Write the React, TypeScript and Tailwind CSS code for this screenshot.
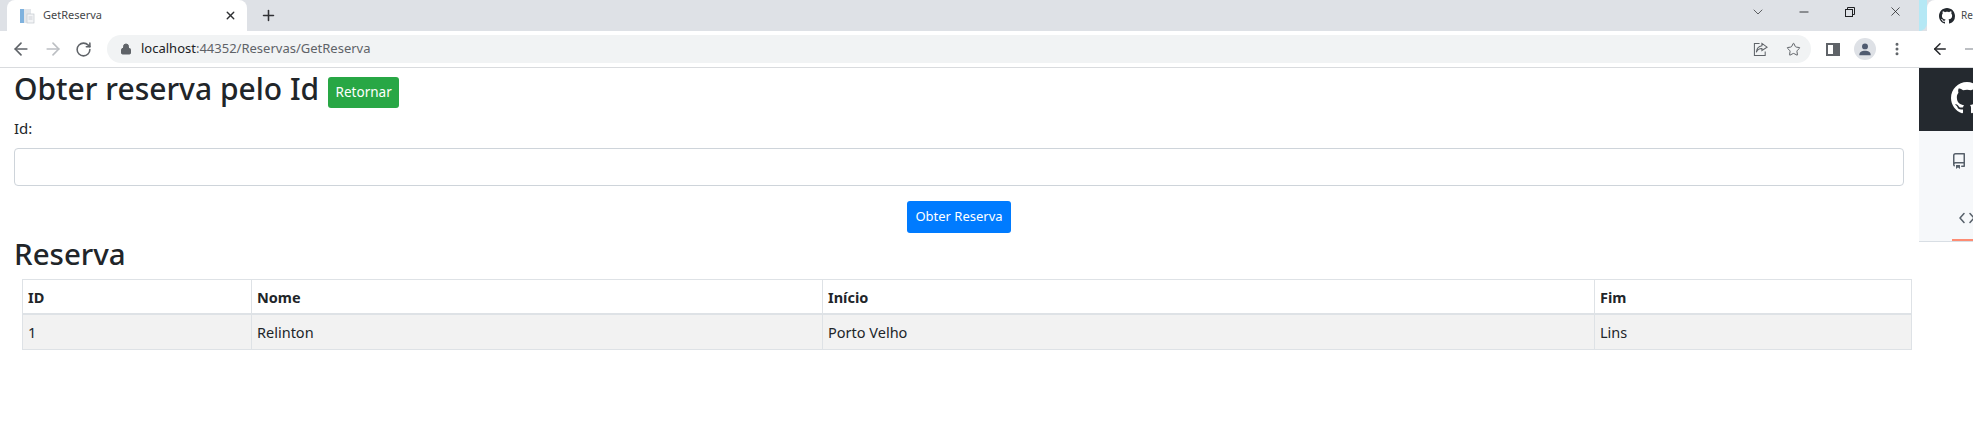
import React from "react";
import { ArrowLeft, ArrowRight, RotateCw, Lock, Plus, X, ChevronDown, Minus, Star, MoreVertical } from "lucide-react";

const font = "font-['Noto_Sans','Open_Sans',sans-serif]";

function GithubMark({ className }: { className?: string }) {
  return (
    <svg viewBox="0 0 16 16" className={className} fill="currentColor">
      <path d="M8 0C3.58 0 0 3.58 0 8c0 3.54 2.29 6.53 5.47 7.59.4.07.55-.17.55-.38 0-.19-.01-.82-.01-1.49-2.01.37-2.53-.49-2.69-.94-.09-.23-.48-.94-.82-1.13-.28-.15-.68-.52-.01-.53.63-.01 1.08.58 1.23.82.72 1.21 1.87.87 2.33.66.07-.52.28-.87.51-1.07-1.78-.2-3.64-.89-3.64-3.95 0-.87.31-1.59.82-2.15-.08-.2-.36-1.02.08-2.12 0 0 .67-.21 2.2.82.64-.18 1.32-.27 2-.27s1.36.09 2 .27c1.53-1.04 2.2-.82 2.2-.82.44 1.1.16 1.92.08 2.12.51.56.82 1.27.82 2.15 0 3.07-1.87 3.75-3.65 3.95.29.25.54.73.54 1.48 0 1.07-.01 1.93-.01 2.2 0 .21.15.46.55.38A8.01 8.01 0 0 0 16 8c0-4.42-3.58-8-8-8z" />
    </svg>
  );
}

function PageIcon() {
  return (
    <svg viewBox="0 0 16 16" className="w-4 h-4 shrink-0">
      <rect x="1" y="1" width="4" height="14" fill="#7fb2de" />
      <rect x="5" y="1" width="7" height="14" fill="#e3e6ea" />
      <rect x="8" y="6" width="7" height="9" fill="#f3f4f6" stroke="#c4c8cf" strokeWidth="0.7" />
      <path d="M9.5 9h4M9.5 11h4" stroke="#c4c8cf" strokeWidth="0.8" />
    </svg>
  );
}

function RestoreIcon() {
  return (
    <svg viewBox="0 0 10 10" className="w-[10px] h-[10px]" fill="none" stroke="#1f2023" strokeWidth="1">
      <rect x="0.5" y="2.5" width="7" height="7" />
      <path d="M2.5 2.5V0.5H9.5V7.5H7.5" />
    </svg>
  );
}

function ShareIcon() {
  return (
    <svg viewBox="0 0 16 16" className="w-[15px] h-[15px]" fill="none" stroke="#5f6368" strokeWidth="1.1">
      <path d="M7 1.500H1.500V14.500H13V10" />
      <path d="M9.500 1.500L15 5.500L9.500 9V7C6.500 7 4.500 8.500 3.500 11C3.800 7.500 6 4.500 9.500 4Z" />
    </svg>
  );
}

function RepoIcon() {
  return (
    <svg viewBox="0 0 16 16" className="w-4 h-4" fill="#57606a">
      <path d="M2 2.5A2.5 2.5 0 0 1 4.5 0h8.75a.75.75 0 0 1 .75.75v12.5a.75.75 0 0 1-.75.75h-2.5a.75.75 0 0 1 0-1.5h1.75v-2h-8a1 1 0 0 0-.71 1.71.75.75 0 0 1-1.07 1.05A2.5 2.5 0 0 1 2 11.5Zm10.5-1h-8a1 1 0 0 0-1 1v6.71c.31-.14.65-.21 1-.21h8ZM5 12.25a.25.25 0 0 1 .25-.25h3.5a.25.25 0 0 1 .25.25v3.25a.25.25 0 0 1-.4.2l-1.45-1.09a.25.25 0 0 0-.3 0L5.4 15.7a.25.25 0 0 1-.4-.2Z" />
    </svg>
  );
}

function TabStrip() {
  return (
    <div className="h-[31px] bg-[#dee1e6] flex items-stretch">
      <div className="w-[7px]" />
      <div className="w-[240px] bg-white rounded-t-lg flex items-center pl-[12px] pr-[10px] gap-[8px]">
        <PageIcon />
        <span className="text-[11px] text-[#45474a] flex-1">GetReserva</span>
        <X className="w-[13px] h-[13px] text-[#2e3033]" strokeWidth={2.5} />
      </div>
      <div className="w-[30px] flex items-center justify-end">
        <Plus className="w-[17px] h-[17px] text-[#303135]" strokeWidth={2.2} />
      </div>
      <div className="flex-1 flex items-center justify-end pr-[16px] pb-[8px]">
        <ChevronDown className="w-[16px] h-[16px] text-[#3c3d40]" strokeWidth={1.2} />
        <Minus className="w-[14px] h-[14px] ml-[31px] text-[#1f2023]" strokeWidth={1.5} />
        <div className="ml-[34px]"><RestoreIcon /></div>
        <X className="w-[15px] h-[15px] ml-[33px] text-[#1f2023]" strokeWidth={1.2} />
      </div>
      <div className="w-[8px] bg-[#b5e8f5] rounded-br-lg" />
      <div className="w-[46px] bg-white rounded-tl-lg flex items-center pl-[12px] gap-[6px] overflow-hidden">
        <GithubMark className="w-[16px] h-[16px] text-[#24292f] shrink-0" />
        <span className="text-[10px] text-[#45474a]">Re</span>
      </div>
    </div>
  );
}

function Toolbar() {
  return (
    <div className="h-[37px] bg-white border-b border-[#d9dbde] flex items-center">
      <div className="flex items-center w-[107px] pl-[11px] gap-[12px]">
        <ArrowLeft className="w-[20px] h-[20px] text-[#5f6368]" strokeWidth={2} />
        <ArrowRight className="w-[20px] h-[20px] text-[#bcbfc3]" strokeWidth={2} />
        <RotateCw className="w-[17px] h-[17px] text-[#5f6368]" strokeWidth={2.2} />
      </div>
      <div className="w-[1704px] h-[28px] rounded-full bg-[#f1f3f4] flex items-center pl-[13px] pr-[10px]">
        <Lock className="w-[12px] h-[12px] text-[#5f6368]" fill="#5f6368" strokeWidth={2} />
        <span className="ml-[9px] text-[13px] text-[#5f6368]"><span className="text-[#202124]">localhost</span>:44352/Reservas/GetReserva</span>
        <div className="flex-1" />
        <ShareIcon />
        <Star className="w-[15px] h-[15px] ml-[18px] text-[#5f6368]" strokeWidth={1.6} />
      </div>
      <div className="w-[14px] h-[13px] ml-[15px] border-y-2 border-l-[2px] border-r-[7px] border-[#5f6368]" />
      <div className="ml-[14px] w-[22px] h-[22px] rounded-full bg-[#dee1e6] flex items-center justify-center">
        <svg viewBox="0 0 16 16" className="w-[14px] h-[14px]" fill="#4f5b70">
          <circle cx="8" cy="5" r="3.4" /><path d="M1.5 15c0-3.6 3-5 6.5-5s6.5 1.400 6.500 5z" />
        </svg>
      </div>
      <MoreVertical className="w-[16px] h-[16px] ml-[13px] text-[#5f6368]" strokeWidth={2.5} />
      <div className="w-[26px]" />
      <ArrowLeft className="w-[18px] h-[18px] text-[#24262a]" strokeWidth={2} />
      <div className="ml-[16px] flex-1 h-[2px] bg-[#bcbfc3]" />
    </div>
  );
}

function SidePanel() {
  return (
    <div className="w-[54px] shrink-0">
      <div className="h-[63px] bg-[#24292f] pl-[32px] pt-[14px] overflow-hidden">
        <GithubMark className="w-[32px] h-[32px] text-white" />
      </div>
      <div className="h-[111px] bg-[#f6f8fa] border-b border-[#d8dee4] relative overflow-hidden">
        <div className="pl-[32px] pt-[22px]"><RepoIcon /></div>
        <div className="pl-[40px] pt-[41px]">
          <svg viewBox="0 0 16 16" className="w-4 h-4" fill="none" stroke="#57606a" strokeWidth="1.5" strokeLinecap="round" strokeLinejoin="round">
            <path d="M5 3.500L1 8l4 4.500M11 3.500L15 8l-4 4.500" />
          </svg>
        </div>
        <div className="absolute left-[33px] right-0 bottom-0 h-[2px] bg-[#fd8c73]" />
      </div>
    </div>
  );
}

function ReservaTable() {
  const cell = "border border-[#dee2e6] px-[5px] text-left";
  const head = cell + " font-bold border-b-2 pt-[3px]";
  return (
    <div className="pl-[22px] pr-[7px]">
      <table className="w-full table-fixed border-collapse text-[14.5px] text-[#212529]">
        <colgroup>
          <col className="w-[229px]" />
          <col className="w-[571px]" />
          <col className="w-[772px]" />
          <col />
        </colgroup>
        <thead>
          <tr className="h-[34px] border-b-2 border-[#dee2e6]">
            <th className={head}>ID</th>
            <th className={head}>Nome</th>
            <th className={head}>Início</th>
            <th className={head}>Fim</th>
          </tr>
        </thead>
        <tbody>
          <tr className="h-[36px] bg-[#f2f2f2]">
            <td className={cell + " pt-[2px]"}>1</td>
            <td className={cell + " pt-[2px]"}>Relinton</td>
            <td className={cell + " pt-[2px]"}>Porto Velho</td>
            <td className={cell + " pt-[2px]"}>Lins</td>
          </tr>
        </tbody>
      </table>
    </div>
  );
}

export default function App() {
  return (
    <div className={`w-[1973px] h-[427px] bg-white overflow-hidden ${font}`}>
      <TabStrip />
      <Toolbar />
      <div className="flex">
        <div className="w-[1919px] shrink-0">
          <div className="pl-[14px] pr-[15px]">
            <div className="flex items-center h-[42px]">
              <h1 className="text-[30px] leading-[38px] font-medium text-[#212529]">Obter reserva pelo Id</h1>
              <button className="ml-[9px] mt-[7px] h-[31px] w-[71px] rounded-[3px] bg-[#28a745] text-white text-[13.5px]">Retornar</button>
            </div>
            <label className="block mt-[6px] text-[15px] leading-[24px] text-[#212529]">Id:</label>
            <input className="block mt-[8px] w-full h-[38px] rounded-[4px] border border-[#ced4da] bg-white" />
            <div className="flex justify-center mt-[15px]">
              <button className="h-[32px] w-[104px] rounded-[3px] bg-[#007bff] text-white text-[13px]">Obter Reserva</button>
            </div>
            <h2 className="mt-[2px] mb-[6px] text-[29.5px] leading-[38px] font-medium text-[#212529]">Reserva</h2>
          </div>
          <ReservaTable />
        </div>
        <SidePanel />
      </div>
    </div>
  );
}
